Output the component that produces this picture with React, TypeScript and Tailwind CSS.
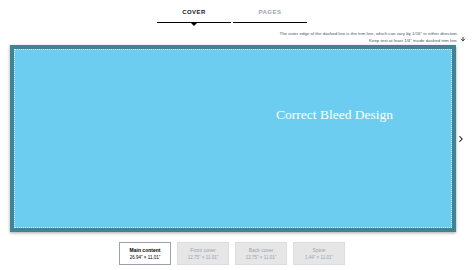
import { ChevronRight, ArrowDown } from 'lucide-react';

const sizes = [
  { name: 'Main content', dim: '26.94" × 11.01"', active: true },
  { name: 'Front cover', dim: '12.75" × 11.01"' },
  { name: 'Back cover', dim: '12.75" × 11.01"' },
  { name: 'Spine', dim: '1.44" × 11.01"' },
];

export default function App() {
  return (
    <div className="w-[474px] h-[270px] bg-white overflow-hidden" style={{ fontFamily: '"Liberation Sans", Arial, sans-serif' }}>
      {/* Tabs */}
      <div className="flex justify-center pt-[8px] gap-[2px] pr-[10px]">
        <div className="relative w-[74px] border-b-[1.5px] border-black pb-[5px] text-center text-[6px] font-bold tracking-[0.08em] text-gray-900">
          COVER
          <span className="absolute left-1/2 -translate-x-1/2 -bottom-[4px] w-0 h-0 border-l-[3px] border-r-[3px] border-t-[3px] border-l-transparent border-r-transparent border-t-black" />
        </div>
        <div className="w-[74px] border-b-[1.5px] border-black pb-[5px] text-center text-[6px] font-bold tracking-[0.08em] text-gray-400">
          PAGES
        </div>
      </div>

      {/* Notes */}
      <div className="flex justify-end pr-[8px] mt-[7px] text-[4.4px] leading-[7px] text-gray-600">
        <div className="text-right">
          <div>The outer edge of the dashed line is the trim line, which can vary by 1/16" in either direction.</div>
          <div>Keep text at least 1/4" inside dashed trim line.</div>
        </div>
        <ArrowDown className="w-[6px] h-[6px] ml-[2px] mt-[6px] text-black" strokeWidth={3} />
      </div>

      {/* Canvas */}
      <div className="flex items-center mt-[1px]">
        <div className="ml-[10px] w-[446px] h-[187px] bg-[#3f8394] p-[4px] shadow-[0_1px_3px_rgba(0,0,0,0.35)]">
          <div className="w-full h-full border border-dotted border-[#c9eef9] bg-[#6ccdf0] flex items-center justify-end pr-[58px] pb-[46px]">
            <span className="text-white text-[13.5px]" style={{ fontFamily: '"Liberation Serif", "Times New Roman", serif' }}>
              Correct Bleed Design
            </span>
          </div>
        </div>
        <ChevronRight className="w-[10px] h-[10px] text-black" strokeWidth={2.5} />
      </div>

      {/* Size selector */}
      <div className="flex justify-center gap-[6px] mt-[10px] pr-[10px]">
        {sizes.map((s) => (
          <div
            key={s.name}
            className={`w-[52px] h-[23px] flex flex-col items-center justify-center text-[4.5px] leading-[7px] ${
              s.active ? 'bg-white border border-gray-400 text-black' : 'bg-[#e6e6e6] border border-[#dcdcdc] text-gray-400'
            }`}
          >
            <div className={s.active ? 'font-bold text-[5px]' : 'text-[5px]'}>{s.name}</div>
            <div>{s.dim}</div>
          </div>
        ))}
      </div>
    </div>
  );
}
